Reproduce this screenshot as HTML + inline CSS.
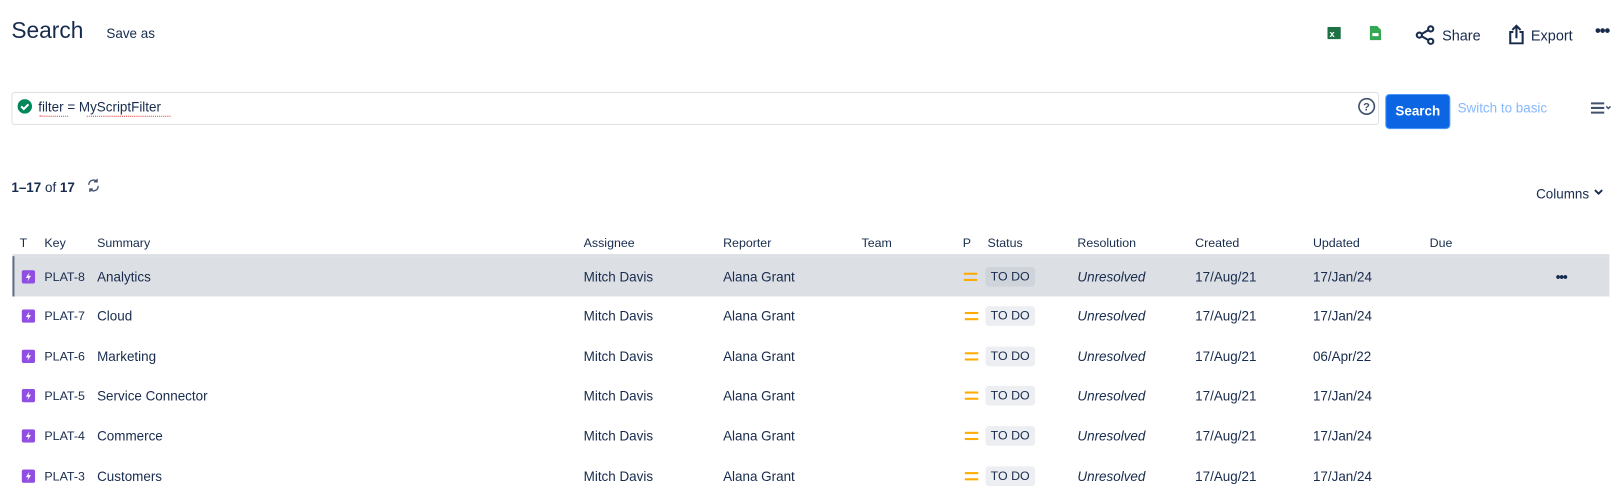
<!DOCTYPE html>
<html><head><style>
*{margin:0;padding:0;box-sizing:border-box}
body{width:1620px;height:489px;overflow:hidden;background:#fff;font-family:"Liberation Sans",sans-serif;color:#172b4d;font-size:13px}
#w{position:absolute;left:0;top:0;width:1570px;height:475px;transform:scale(1.033);transform-origin:0 0}
.a{position:absolute;white-space:nowrap}
.row{position:absolute;left:12px;width:1546px;height:39px}
.row .a{top:50%;transform:translateY(-50%)}
.ic{width:13px;height:13px;left:9px}
.lz{left:942px;background:#eceef2;border-radius:3px;padding:2px 5px;font-size:12px;height:19px;line-height:15px}
.pr{left:922px;width:13px;height:8px;border-top:2px solid #ffab00;border-bottom:2px solid #ffab00}
.h{top:228px;font-size:12px}
</style></head><body><div id="w">
<div class="a" style="left:11px;top:17px;font-size:22px;color:#172b4d">Search</div>
<div class="a" style="left:103px;top:25px;font-size:13px">Save as</div>
<svg class="a" style="left:1285px;top:26px" width="13" height="12"><rect width="13" height="12" rx="1" fill="#1e7145"/><text x="2" y="10" font-size="9" fill="#fff" font-family="Liberation Sans" font-weight="bold">x</text></svg>
<svg class="a" style="left:1326px;top:25px" width="11" height="14"><path d="M0 0h7l4 4v10H0z" fill="#34a853"/><rect x="2.5" y="7" width="6" height="3" fill="#fff"/></svg>
<svg class="a" style="left:1370px;top:24px" width="20" height="20"><g fill="none" stroke="#172b4d" stroke-width="2"><circle cx="15" cy="4" r="2.5"/><circle cx="4" cy="10" r="2.5"/><circle cx="15" cy="16" r="2.5"/><path d="M6 9l7-4M6 11l7 4"/></g></svg>
<div class="a" style="left:1396px;top:26px;font-size:14px">Share</div>
<svg class="a" style="left:1460px;top:23px" width="16" height="20"><g fill="none" stroke="#172b4d" stroke-width="2"><path d="M5 8H2v11h12V8h-3"/><path d="M8 14V2M4 6l4-4 4 4"/></g></svg>
<div class="a" style="left:1482px;top:26px;font-size:14px">Export</div>
<div class="a" style="left:1544px;top:22px;font-size:16px;font-weight:bold;letter-spacing:-1px">•••</div>
<div class="a" style="left:11px;top:89px;width:1324px;height:32px;border:1px solid #dfe1e6;border-radius:3px"></div>
<svg class="a" style="left:17px;top:96px" width="14" height="14"><circle cx="7" cy="7" r="7" fill="#00875a"/><path d="M3.5 7l2.5 2.5 4.5-4.5" stroke="#fff" stroke-width="2" fill="none"/></svg>
<div class="a" style="left:37px;top:96px;font-size:13px">filter = MyScriptFilter</div>
<div class="a" style="left:38px;top:112px;width:28px;border-top:1px dotted #e33"></div>
<div class="a" style="left:84px;top:112px;width:81px;border-top:1px dotted #e33"></div>
<svg class="a" style="left:1314px;top:94px" width="18" height="18"><circle cx="9" cy="9" r="7.5" fill="none" stroke="#42526e" stroke-width="1.6"/><text x="5.5" y="13" font-size="11" font-weight="bold" fill="#42526e" font-family="Liberation Sans">?</text></svg>
<div class="a" style="left:1341px;top:91px;width:63px;height:34px;background:#0c66e4;border:1px solid #4c9aff;border-radius:4px;color:#fff;font-weight:bold;font-size:13px;text-align:center;line-height:31px">Search</div>
<div class="a" style="left:1411px;top:97px;font-size:13px;color:#85b8ff">Switch to basic</div>
<svg class="a" style="left:1540px;top:99px" width="20" height="12"><path d="M0 1h13M0 5.5h13M0 10h13" stroke="#42526e" stroke-width="2"/><path d="M15 4l2 2 2-2" stroke="#42526e" stroke-width="1.5" fill="none"/></svg>
<div class="a" style="left:11px;top:174px;font-size:13px"><b>1–17</b> of <b>17</b></div>
<svg class="a" style="left:84px;top:173px" width="13" height="13"><path d="M2 6a4.5 4.5 0 0 1 8-3M11 7a4.5 4.5 0 0 1-8 3" fill="none" stroke="#42526e" stroke-width="1.3"/><path d="M10 0v3H7M3 13v-3h3" fill="none" stroke="#42526e" stroke-width="1.3"/></svg>
<div class="a" style="left:1487px;top:180px;font-size:13px">Columns</div>
<svg class="a" style="left:1543px;top:183px" width="9" height="7"><path d="M1 1l3.5 3.5L8 1" stroke="#172b4d" stroke-width="1.8" fill="none"/></svg>
<div class="a h" style="left:19px">T</div><div class="a h" style="left:43px">Key</div><div class="a h" style="left:94px">Summary</div><div class="a h" style="left:565px">Assignee</div><div class="a h" style="left:700px">Reporter</div><div class="a h" style="left:834px">Team</div><div class="a h" style="left:932px">P</div><div class="a h" style="left:956px">Status</div><div class="a h" style="left:1043px">Resolution</div><div class="a h" style="left:1157px">Created</div><div class="a h" style="left:1271px">Updated</div><div class="a h" style="left:1384px">Due</div>
<div class="a" style="left:12px;top:246px;width:1546px;height:2px;background:#dcdfe4"></div>

<div class="row" style="top:248px;background:#dcdfe4;border-left:2px solid #626f86">
<svg class="a ic" style="left:7px" viewBox="0 0 13 13"><rect width="13" height="13" rx="2" fill="#904ee2"/><path d="M7.5 2L4 7.5h2.5L5.5 11 9 5.5H6.5z" fill="#fff"/></svg>
<div class="a" style="left:29px;font-size:12px">PLAT-8</div><div class="a" style="left:80px">Analytics</div><div class="a" style="left:551px">Mitch Davis</div><div class="a" style="left:686px">Alana Grant</div><div class="a pr" style="left:919px"></div><div class="a lz" style="left:940px;background:#cfd3da">TO DO</div><div class="a" style="left:1029px;font-style:italic">Unresolved</div><div class="a" style="left:1143px">17/Aug/21</div><div class="a" style="left:1257px">17/Jan/24</div><div class="a" style="left:1492px;font-weight:bold;letter-spacing:-1px">•••</div>
</div>
<div class="row" style="top:286.6px">
<svg class="a ic" viewBox="0 0 13 13"><rect width="13" height="13" rx="2" fill="#904ee2"/><path d="M7.5 2L4 7.5h2.5L5.5 11 9 5.5H6.5z" fill="#fff"/></svg>
<div class="a" style="left:31px;font-size:12px">PLAT-7</div><div class="a" style="left:82px">Cloud</div><div class="a" style="left:553px">Mitch Davis</div><div class="a" style="left:688px">Alana Grant</div><div class="a pr"></div><div class="a lz">TO DO</div><div class="a" style="left:1031px;font-style:italic">Unresolved</div><div class="a" style="left:1145px">17/Aug/21</div><div class="a" style="left:1259px">17/Jan/24</div>
</div>
<div class="row" style="top:325.2px">
<svg class="a ic" viewBox="0 0 13 13"><rect width="13" height="13" rx="2" fill="#904ee2"/><path d="M7.5 2L4 7.5h2.5L5.5 11 9 5.5H6.5z" fill="#fff"/></svg>
<div class="a" style="left:31px;font-size:12px">PLAT-6</div><div class="a" style="left:82px">Marketing</div><div class="a" style="left:553px">Mitch Davis</div><div class="a" style="left:688px">Alana Grant</div><div class="a pr"></div><div class="a lz">TO DO</div><div class="a" style="left:1031px;font-style:italic">Unresolved</div><div class="a" style="left:1145px">17/Aug/21</div><div class="a" style="left:1259px">06/Apr/22</div>
</div>
<div class="row" style="top:363.8px">
<svg class="a ic" viewBox="0 0 13 13"><rect width="13" height="13" rx="2" fill="#904ee2"/><path d="M7.5 2L4 7.5h2.5L5.5 11 9 5.5H6.5z" fill="#fff"/></svg>
<div class="a" style="left:31px;font-size:12px">PLAT-5</div><div class="a" style="left:82px">Service Connector</div><div class="a" style="left:553px">Mitch Davis</div><div class="a" style="left:688px">Alana Grant</div><div class="a pr"></div><div class="a lz">TO DO</div><div class="a" style="left:1031px;font-style:italic">Unresolved</div><div class="a" style="left:1145px">17/Aug/21</div><div class="a" style="left:1259px">17/Jan/24</div>
</div>
<div class="row" style="top:402.4px">
<svg class="a ic" viewBox="0 0 13 13"><rect width="13" height="13" rx="2" fill="#904ee2"/><path d="M7.5 2L4 7.5h2.5L5.5 11 9 5.5H6.5z" fill="#fff"/></svg>
<div class="a" style="left:31px;font-size:12px">PLAT-4</div><div class="a" style="left:82px">Commerce</div><div class="a" style="left:553px">Mitch Davis</div><div class="a" style="left:688px">Alana Grant</div><div class="a pr"></div><div class="a lz">TO DO</div><div class="a" style="left:1031px;font-style:italic">Unresolved</div><div class="a" style="left:1145px">17/Aug/21</div><div class="a" style="left:1259px">17/Jan/24</div>
</div>
<div class="row" style="top:441px">
<svg class="a ic" viewBox="0 0 13 13"><rect width="13" height="13" rx="2" fill="#904ee2"/><path d="M7.5 2L4 7.5h2.5L5.5 11 9 5.5H6.5z" fill="#fff"/></svg>
<div class="a" style="left:31px;font-size:12px">PLAT-3</div><div class="a" style="left:82px">Customers</div><div class="a" style="left:553px">Mitch Davis</div><div class="a" style="left:688px">Alana Grant</div><div class="a pr"></div><div class="a lz">TO DO</div><div class="a" style="left:1031px;font-style:italic">Unresolved</div><div class="a" style="left:1145px">17/Aug/21</div><div class="a" style="left:1259px">17/Jan/24</div>
</div>
</div></body></html>
